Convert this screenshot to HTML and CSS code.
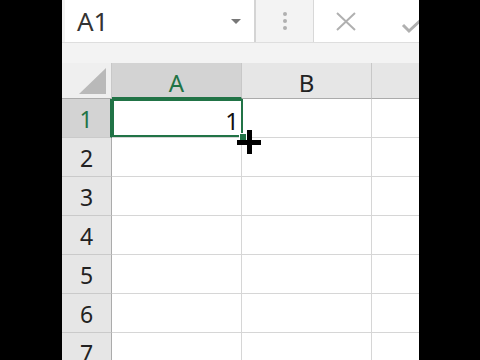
FILE: index.html
```html
<!DOCTYPE html>
<html lang="en">
<head>
    <meta charset="UTF-8">
    <meta name="viewport" content="width=device-width, initial-scale=1.0">
    <title>Sheet</title>
    <link rel="stylesheet" href="styles.css">
</head>
<body>
    <div class="screen">
        <!-- Name box and formula bar -->
        <div class="toolbar">
            <div class="namebox">
                <span>A1</span>
                <span class="arrow"></span>
            </div>
            <div class="grip">
                <span></span><span></span><span></span>
            </div>
            <div class="formula">
                <svg class="icon-x" width="22" height="19" viewBox="0 0 22 19">
                    <path d="M2 1 L20 18 M20 1 L2 18" stroke="#b0b0b0" stroke-width="2" fill="none"/>
                </svg>
                <svg class="icon-check" width="22" height="16" viewBox="0 0 22 16">
                    <path d="M2 7 L8 13 L20 2" stroke="#b0b0b0" stroke-width="3" fill="none"/>
                </svg>
            </div>
        </div>
        <div class="spacer"></div>

        <!-- Grid -->
        <div class="grid">
            <div class="corner"><span class="tri"></span></div>
            <div class="colhead active">A</div>
            <div class="colhead">B</div>
            <div class="colhead last"></div>

            <div class="rowhead active">1</div>
            <div class="cell num selected">1<span class="handle"></span></div>
            <div class="cell"></div>
            <div class="cell last"></div>

            <div class="rowhead">2</div>
            <div class="cell"></div>
            <div class="cell"></div>
            <div class="cell last"></div>

            <div class="rowhead">3</div>
            <div class="cell"></div>
            <div class="cell"></div>
            <div class="cell last"></div>

            <div class="rowhead">4</div>
            <div class="cell"></div>
            <div class="cell"></div>
            <div class="cell last"></div>

            <div class="rowhead">5</div>
            <div class="cell"></div>
            <div class="cell"></div>
            <div class="cell last"></div>

            <div class="rowhead">6</div>
            <div class="cell"></div>
            <div class="cell"></div>
            <div class="cell last"></div>

            <div class="rowhead">7</div>
            <div class="cell"></div>
            <div class="cell"></div>
            <div class="cell last"></div>
        </div>

        <!-- Fill cursor -->
        <div class="cursor"></div>
    </div>
</body>
</html>
```

FILE: styles.css
```css
body {
    margin: 0;
    padding: 0;
    background: #000;
    height: 360px;
    overflow: hidden;
    font-family: "Noto Sans", "Open Sans", sans-serif;
}
.screen {
    position: relative;
    width: 357px;
    height: 360px;
    margin-left: 62px;
    background: #f3f3f3;
    overflow: hidden;
}
.toolbar {
    display: flex;
    height: 42px;
    padding-left: 3px;
    border-bottom: 1px solid #dedede;
}
.namebox {
    flex-shrink: 0;
    width: 177px;
    padding-left: 12px;
    background: #fff;
    border-right: 2px solid #d4d4d4;
    display: flex;
    align-items: center;
    justify-content: space-between;
    font-size: 26px;
    color: #333;
}
.arrow {
    width: 0;
    height: 0;
    margin-right: 13px;
    border-left: 5px solid transparent;
    border-right: 5px solid transparent;
    border-top: 5px solid #777;
}
.grip {
    flex-shrink: 0;
    width: 57px;
    display: flex;
    flex-direction: column;
    align-items: center;
    justify-content: center;
    gap: 3px;
}
.grip span {
    width: 4px;
    height: 4px;
    border-radius: 50%;
    background: #b0b0b0;
}
.formula {
    flex: 1;
    min-width: 0;
    overflow: hidden;
    background: #fff;
    border-left: 1px solid #d8d8d8;
    display: flex;
    align-items: center;
    padding-left: 21px;
}
.formula svg {
    flex-shrink: 0;
}
.icon-check {
    margin-left: 44px;
    margin-top: 10px;
}
.spacer {
    height: 20px;
}
.grid {
    display: grid;
    grid-template-columns: 50px 130px 130px 1fr;
    grid-template-rows: 36px repeat(7, 39px);
    background: #fff;
}
.corner {
    position: relative;
    background: #efefef;
    border-bottom: 1px solid #ababab;
    border-right: 1px solid #c8c8c8;
}
.tri {
    position: absolute;
    right: 5px;
    bottom: 4px;
    width: 0;
    height: 0;
    border-left: 27px solid transparent;
    border-bottom: 26px solid #b9b9b9;
}
.colhead {
    background: #e6e6e6;
    border-bottom: 1px solid #ababab;
    border-right: 1px solid #c8c8c8;
    display: flex;
    align-items: center;
    justify-content: center;
    font-size: 24px;
    color: #222;
    padding-top: 4px;
    box-sizing: border-box;
}
.colhead.active {
    background: #d3d3d3;
    color: #217346;
    border-bottom: 2px solid #217346;
}
.colhead.last {
    border-right: none;
}
.rowhead {
    background: #e6e6e6;
    border-bottom: 1px solid #cacaca;
    border-right: 1px solid #ababab;
    display: flex;
    align-items: center;
    justify-content: center;
    font-size: 23px;
    color: #222;
    padding-top: 2px;
    box-sizing: border-box;
}
.rowhead.active {
    background: #d3d3d3;
    color: #217346;
    border-right: 2px solid #217346;
}
.cell {
    border-bottom: 1px solid #d6d6d6;
    border-right: 1px solid #d6d6d6;
}
.cell.last {
    border-right: none;
}
.cell.num {
    display: flex;
    align-items: flex-end;
    justify-content: flex-end;
    padding-right: 4px;
    font-size: 24px;
    line-height: 32px;
    color: #111;
}
.selected {
    position: relative;
    box-shadow: inset 0 0 0 2px #217346;
    border-right: none;
    margin-right: -1px;
}
.handle {
    position: absolute;
    right: -4px;
    bottom: -4px;
    width: 6px;
    height: 6px;
    background: #217346;
    border: 1px solid #fff;
}
.cursor {
    position: absolute;
    left: 175px;
    top: 130px;
    width: 24px;
    height: 24px;
}
.cursor::before,
.cursor::after {
    content: "";
    position: absolute;
    background: #000;
}
.cursor::before {
    left: 0;
    top: 10px;
    width: 24px;
    height: 5px;
}
.cursor::after {
    left: 10px;
    top: 0;
    width: 5px;
    height: 24px;
}
```
